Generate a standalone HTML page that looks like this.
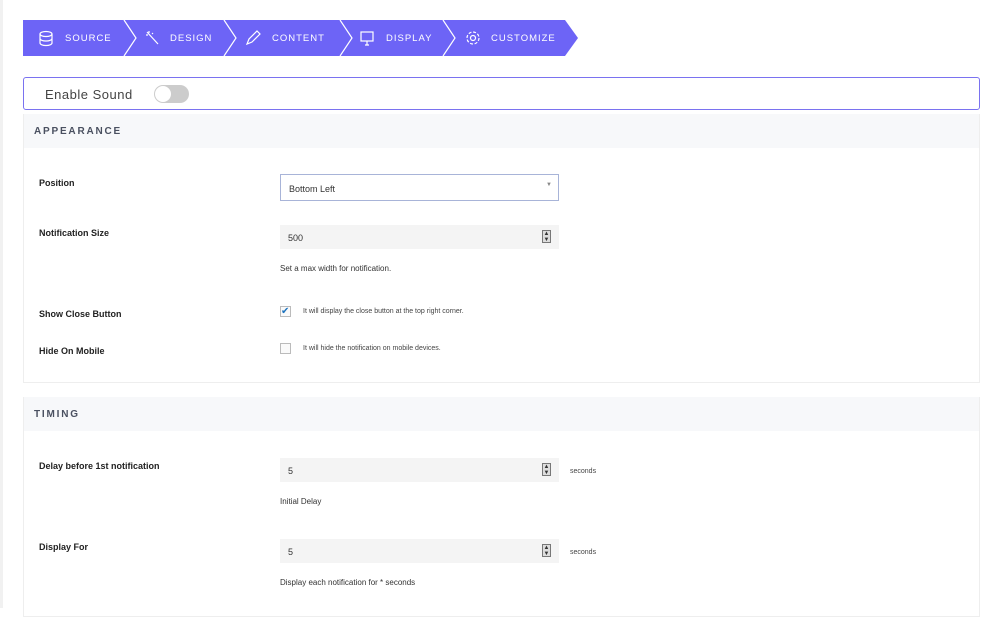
<!DOCTYPE html>
<html><head><meta charset="utf-8"><style>
*{box-sizing:border-box;margin:0;padding:0}
body{width:1000px;height:608px;overflow:hidden;background:#fff;font-family:"Liberation Sans",sans-serif;position:relative;color:#333}
.lb{position:absolute;left:0;top:0;width:3px;height:608px;background:#f1f1f1}
.nav{position:absolute;left:23px;top:20px;height:36px;width:555px}
.nav svg{position:absolute;left:0;top:0}
.nt{position:absolute;top:13px;font-size:9.5px;letter-spacing:1px;color:#fff}
.sound{position:absolute;left:23px;top:77px;width:957px;height:33px;border:1px solid #7a72f0;border-radius:3px}
.sound span{position:absolute;left:21px;top:9px;font-size:13px;letter-spacing:.5px;color:#444}
.tg{position:absolute;left:130px;top:7px;width:35px;height:18px;border-radius:9px;background:#ccc}
.tg i{position:absolute;left:1px;top:1px;width:16px;height:16px;border-radius:50%;background:#fff}
.sec{position:absolute;left:23px;width:957px;border:1px solid #eee;border-top:none}
.hd{height:34px;background:#f7f8fa;font-size:10px;font-weight:bold;letter-spacing:1.8px;color:#4a5060;padding:12px 0 0 10px}
.l{position:absolute;left:15px;font-size:9px;font-weight:bold;color:#222}
.in{position:absolute;left:256px;width:279px;height:24px;background:#f4f4f4;font-size:9px;padding:8px 0 0 8px}
.sp{position:absolute;right:8px;top:5px;width:9px;height:13px;border:1px solid #777;background:#ddd;font-size:6px;line-height:6px;text-align:center}
.h{position:absolute;left:256px;font-size:8px;color:#333}
.cb{position:absolute;left:256px;width:11px;height:11px;border:1px solid #bbb;background:#fafafa}
.ct{position:absolute;left:279px;font-size:7px;color:#444}
.secs{position:absolute;left:546px;font-size:7px;color:#444}
</style></head><body>
<div class="lb"></div>
<div class="nav">
<svg width="556" height="36"><polygon points="0,0 542,0 555,18 542,36 0,36" fill="#6d64f6"/>
<g stroke="#fff" stroke-width="1.2" fill="none">
<polyline points="101,0 113,18 101,36"/><polyline points="201,0 213,18 201,36"/><polyline points="317,0 329,18 317,36"/><polyline points="420,0 432,18 420,36"/>
<ellipse cx="23" cy="14" rx="6" ry="2.5"/><path d="M17 14v9c0 1.4 2.7 2.5 6 2.5s6-1.1 6-2.5v-9M17 18.5c0 1.4 2.7 2.5 6 2.5s6-1.1 6-2.5"/>
<path d="M124 12l11 12M123 15l2 0M126 11l0 2M129 13l1 1"/>
<path d="M224 24l2-5 8-8 3 3-8 8z"/>
<rect x="338" y="12" width="12" height="9"/><path d="M342 25h4M344 21v4"/>
<circle cx="450" cy="18" r="2.5"/><circle cx="450" cy="18" r="6" stroke-dasharray="3 1.7"/>
</g></svg>
<span class="nt" style="left:42px">SOURCE</span>
<span class="nt" style="left:147px">DESIGN</span>
<span class="nt" style="left:249px">CONTENT</span>
<span class="nt" style="left:363px">DISPLAY</span>
<span class="nt" style="left:468px">CUSTOMIZE</span>
</div>
<div class="sound"><span>Enable Sound</span><div class="tg"><i></i></div></div>

<div class="sec" style="top:114px;height:269px">
<div class="hd">APPEARANCE</div>
<div class="l" style="top:64px">Position</div>
<div class="in" style="top:60px;height:27px;background:#fff;border:1px solid #a8b4d8;padding-top:9px">Bottom Left<span style="position:absolute;right:6px;top:7px;font-size:6px;color:#888">▼</span></div>
<div class="l" style="top:114px">Notification Size</div>
<div class="in" style="top:111px">500<div class="sp">▲<br>▼</div></div>
<div class="h" style="top:150px">Set a max width for notification.</div>
<div class="l" style="top:195px">Show Close Button</div>
<div class="cb" style="top:192px;color:#1e73be;font-size:10px;line-height:9px">✔</div>
<div class="ct" style="top:194px">It will display the close button at the top right corner.</div>
<div class="l" style="top:232px">Hide On Mobile</div>
<div class="cb" style="top:229px"></div>
<div class="ct" style="top:231px">It will hide the notification on mobile devices.</div>
</div>

<div class="sec" style="top:397px;height:220px">
<div class="hd">TIMING</div>
<div class="l" style="top:64px">Delay before 1st notification</div>
<div class="in" style="top:61px">5<div class="sp">▲<br>▼</div></div>
<div class="secs" style="top:71px">seconds</div>
<div class="h" style="top:100px">Initial Delay</div>
<div class="l" style="top:145px">Display For</div>
<div class="in" style="top:142px">5<div class="sp">▲<br>▼</div></div>
<div class="secs" style="top:152px">seconds</div>
<div class="h" style="top:181px">Display each notification for * seconds</div>
</div>
</body></html>
